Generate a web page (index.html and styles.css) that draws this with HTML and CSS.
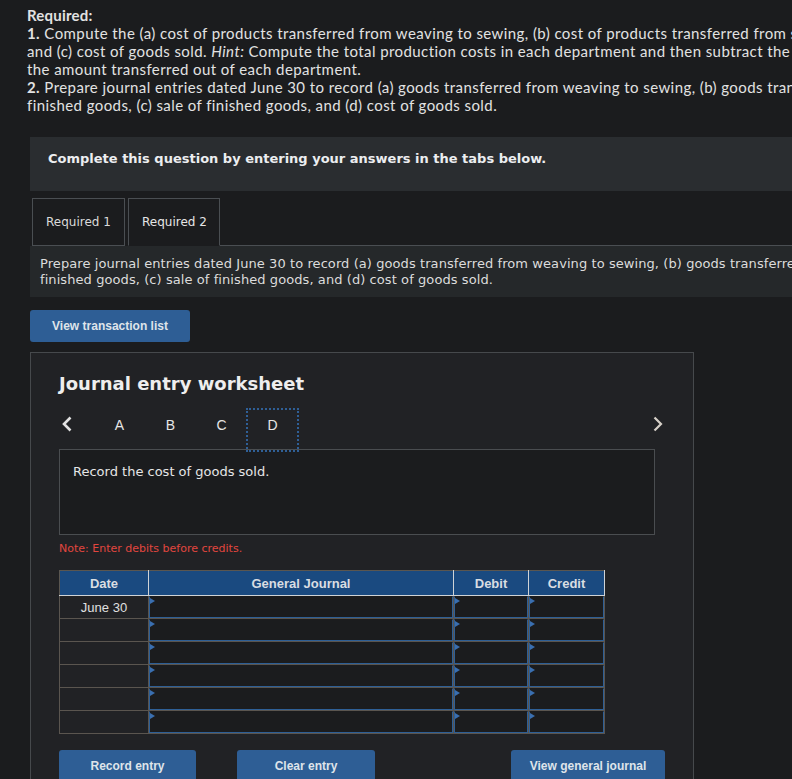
FILE: index.html
```html
<!DOCTYPE html>
<html lang="en">
<head>
<meta charset="utf-8">
<title>Journal entry worksheet</title>
<link rel="stylesheet" href="styles.css">
</head>
<body>
<div class="page">
  <section class="required">
    <div class="line req-title">Required:</div>
    <div class="line"><b>1.</b> Compute the (a) cost of products transferred from weaving to sewing, (b) cost of products transferred from sewing to finished goods,</div>
    <div class="line">and (c) cost of goods sold. <i>Hint:</i> Compute the total production costs in each department and then subtract the ending inventory to get</div>
    <div class="line">the amount transferred out of each department.</div>
    <div class="line"><b>2.</b> Prepare journal entries dated June 30 to record (a) goods transferred from weaving to sewing, (b) goods transferred from sewing to</div>
    <div class="line">finished goods, (c) sale of finished goods, and (d) cost of goods sold.</div>
  </section>

  <div class="main">
    <div class="complete">Complete this question by entering your answers in the tabs below.</div>

    <div class="tabs">
      <div class="tab">Required 1</div>
      <div class="tab active">Required 2</div>
      <div class="tab-rest"></div>
    </div>

    <div class="panel">
      <div class="line">Prepare journal entries dated June 30 to record (a) goods transferred from weaving to sewing, (b) goods transferred from sewing to</div>
      <div class="line">finished goods, (c) sale of finished goods, and (d) cost of goods sold.</div>
    </div>

    <button class="btn btn-list">View transaction list</button>

    <div class="worksheet">
      <h2 class="ws-title">Journal entry worksheet</h2>

      <div class="nav">
        <svg class="chev chev-left" width="10" height="16" viewBox="0 0 10 16"><path d="M8.5 1.5 L2 8 L8.5 14.5" fill="none" stroke="#e2e2e2" stroke-width="2.6"/></svg>
        <div class="nav-items">
          <span class="nav-item">A</span>
          <span class="nav-item">B</span>
          <span class="nav-item">C</span>
          <span class="nav-item current">D</span>
        </div>
        <svg class="chev chev-right" width="10" height="16" viewBox="0 0 10 16"><path d="M1.5 1.5 L8 8 L1.5 14.5" fill="none" stroke="#d6d0c8" stroke-width="2.2"/></svg>
      </div>

      <div class="desc">Record the cost of goods sold.</div>
      <div class="note">Note: Enter debits before credits.</div>

      <table class="journal">
        <colgroup>
          <col class="c-date"><col class="c-gj"><col class="c-amt"><col class="c-amt2">
        </colgroup>
        <thead>
          <tr><th>Date</th><th>General Journal</th><th>Debit</th><th>Credit</th></tr>
        </thead>
        <tbody>
          <tr><td class="date">June 30</td><td class="in"><div class="field"></div></td><td class="in"><div class="field"></div></td><td class="in"><div class="field"></div></td></tr>
          <tr><td class="date"></td><td class="in"><div class="field"></div></td><td class="in"><div class="field"></div></td><td class="in"><div class="field"></div></td></tr>
          <tr><td class="date"></td><td class="in"><div class="field"></div></td><td class="in"><div class="field"></div></td><td class="in"><div class="field"></div></td></tr>
          <tr><td class="date"></td><td class="in"><div class="field"></div></td><td class="in"><div class="field"></div></td><td class="in"><div class="field"></div></td></tr>
          <tr><td class="date"></td><td class="in"><div class="field"></div></td><td class="in"><div class="field"></div></td><td class="in"><div class="field"></div></td></tr>
          <tr><td class="date"></td><td class="in"><div class="field"></div></td><td class="in"><div class="field"></div></td><td class="in"><div class="field"></div></td></tr>
        </tbody>
      </table>

      <div class="actions">
        <button class="btn btn-record">Record entry</button>
        <button class="btn btn-clear">Clear entry</button>
        <button class="btn btn-view">View general journal</button>
      </div>
    </div>
  </div>
</div>
</body>
</html>
```

FILE: styles.css
```css
* { box-sizing: border-box; }

html, body {
  margin: 0;
  padding: 0;
}

body {
  background: #1b1c1e;
  color: #dedede;
  width: 792px;
  height: 779px;
  overflow: hidden;
}

.page {
  width: 1100px;
}

.line {
  white-space: nowrap;
}

/* ---------- Required block ---------- */
.required {
  padding: 6px 0 0 27px;
  font-family: Lato, "Open Sans", sans-serif;
  font-size: 15px;
  line-height: 18px;
  letter-spacing: 0.42px;
  color: #e2e2e2;
}

.req-title {
  font-weight: 700;
  letter-spacing: 0.2px;
}

.required b {
  font-weight: 700;
}

/* ---------- main area ---------- */
.main {
  margin-left: 30px;
  margin-top: 23px;
  font-family: "DejaVu Sans", Verdana, sans-serif;
}

.complete {
  height: 54px;
  background: #2a2d30;
  padding: 13px 18px 0;
  font-size: 13px;
  line-height: 18px;
  font-weight: 700;
  color: #eceef0;
}

.tabs {
  display: flex;
  margin-top: 7px;
  height: 48px;
}

.tab {
  height: 48px;
  border: 1px solid #4a4e52;
  padding: 0 0 0 13px;
  display: flex;
  align-items: center;
  font-size: 12px;
  color: #dadada;
}

.tab:first-child {
  margin-left: 2px;
  width: 93px;
}

.tab.active {
  margin-left: 3px;
  width: 92px;
  border-bottom-color: transparent;
  color: #e6e6e6;
}

.tab-rest {
  flex: 1;
  border-bottom: 1px solid #4a4e52;
}

.panel {
  background: #25282a;
  padding: 10px 10px 9px;
  font-size: 13px;
  line-height: 16px;
  letter-spacing: 0.08px;
  color: #dcdcdc;
}

/* ---------- buttons ---------- */
.btn {
  display: block;
  flex: none;
  border: none;
  border-radius: 3px;
  background: #2e5e95;
  color: #dfe4ea;
  font-family: "Liberation Sans", Arial, sans-serif;
  font-weight: 700;
  font-size: 12px;
  height: 32px;
  padding: 0;
  text-align: center;
}

.btn-list {
  margin-top: 13px;
  width: 160px;
}

/* ---------- worksheet ---------- */
.worksheet {
  margin-top: 10px;
  width: 664px;
  height: 460px;
  border: 1px solid #46494c;
  background: #212225;
  padding: 20px 38px 0 28px;
}

.ws-title {
  margin: 0;
  font-size: 18px;
  line-height: 22px;
  font-weight: 700;
  color: #eeeeee;
}

.nav {
  display: flex;
  align-items: flex-start;
  height: 42px;
  margin-top: 12px;
  margin-right: -8px;
}

.chev {
  display: block;
  margin-top: 9px;
  flex: none;
}

.chev-left {
  margin-left: 3px;
}

.nav-items {
  display: flex;
  align-items: flex-start;
  margin-left: 22px;
}

.nav-item {
  width: 51px;
  height: 42px;
  line-height: 36px;
  text-align: center;
  font-family: "Liberation Sans", Arial, sans-serif;
  font-size: 14px;
  color: #e6e6e6;
}

.nav-item.current {
  margin-top: 2px;
  line-height: 32px;
  outline: 2px dotted #2f5f96;
  outline-offset: -1px;
}

.chev-right {
  margin-left: auto;
}

.desc {
  height: 86px;
  border: 1px solid #4a4d50;
  background: #1b1c1e;
  padding: 14px 13px 0;
  font-size: 13px;
  line-height: 16px;
  color: #e6e6e6;
}

.note {
  margin-top: 7px;
  font-size: 11px;
  line-height: 14px;
  color: #e2463f;
}

/* ---------- journal table ---------- */
.journal {
  margin-top: 14px;
  border-collapse: collapse;
  table-layout: fixed;
  width: 545px;
  font-family: "Liberation Sans", Arial, sans-serif;
  font-size: 13px;
}

.c-date { width: 89px; }
.c-gj { width: 305px; }
.c-amt { width: 75px; }
.c-amt2 { width: 76px; }

.journal th {
  height: 25px;
  padding: 0;
  background: #1a4a80;
  color: #d9dde2;
  font-weight: 700;
  text-align: center;
  border-top: 1px solid #5a5650;
  border-bottom: 1px solid #cfd3d6;
  border-left: 1px solid #cfd3d6;
  border-right: 1px solid #cfd3d6;
}

.journal th:first-child {
  border-left-color: #5a5650;
}

.journal td {
  height: 23px;
  padding: 0;
  border: 1px solid #5a554f;
}

.journal td.date {
  text-align: center;
  color: #e0e0e0;
  vertical-align: middle;
}

.journal td.in {
  vertical-align: top;
}

.field {
  position: relative;
  height: 22px;
  background: #1b1c1e;
  border: 1px solid #2e5f96;
  border-top-color: #1b1c1e;
}

.field::before {
  content: "";
  position: absolute;
  left: 0;
  top: 1px;
  border-left: 5px solid #3a6fb0;
  border-top: 3px solid transparent;
  border-bottom: 3px solid transparent;
}

.actions {
  display: flex;
  margin-top: 16px;
}

.btn-record {
  width: 137px;
}

.btn-clear {
  width: 138px;
  margin-left: 41px;
}

.btn-view {
  width: 154px;
  margin-left: 136px;
}
```
